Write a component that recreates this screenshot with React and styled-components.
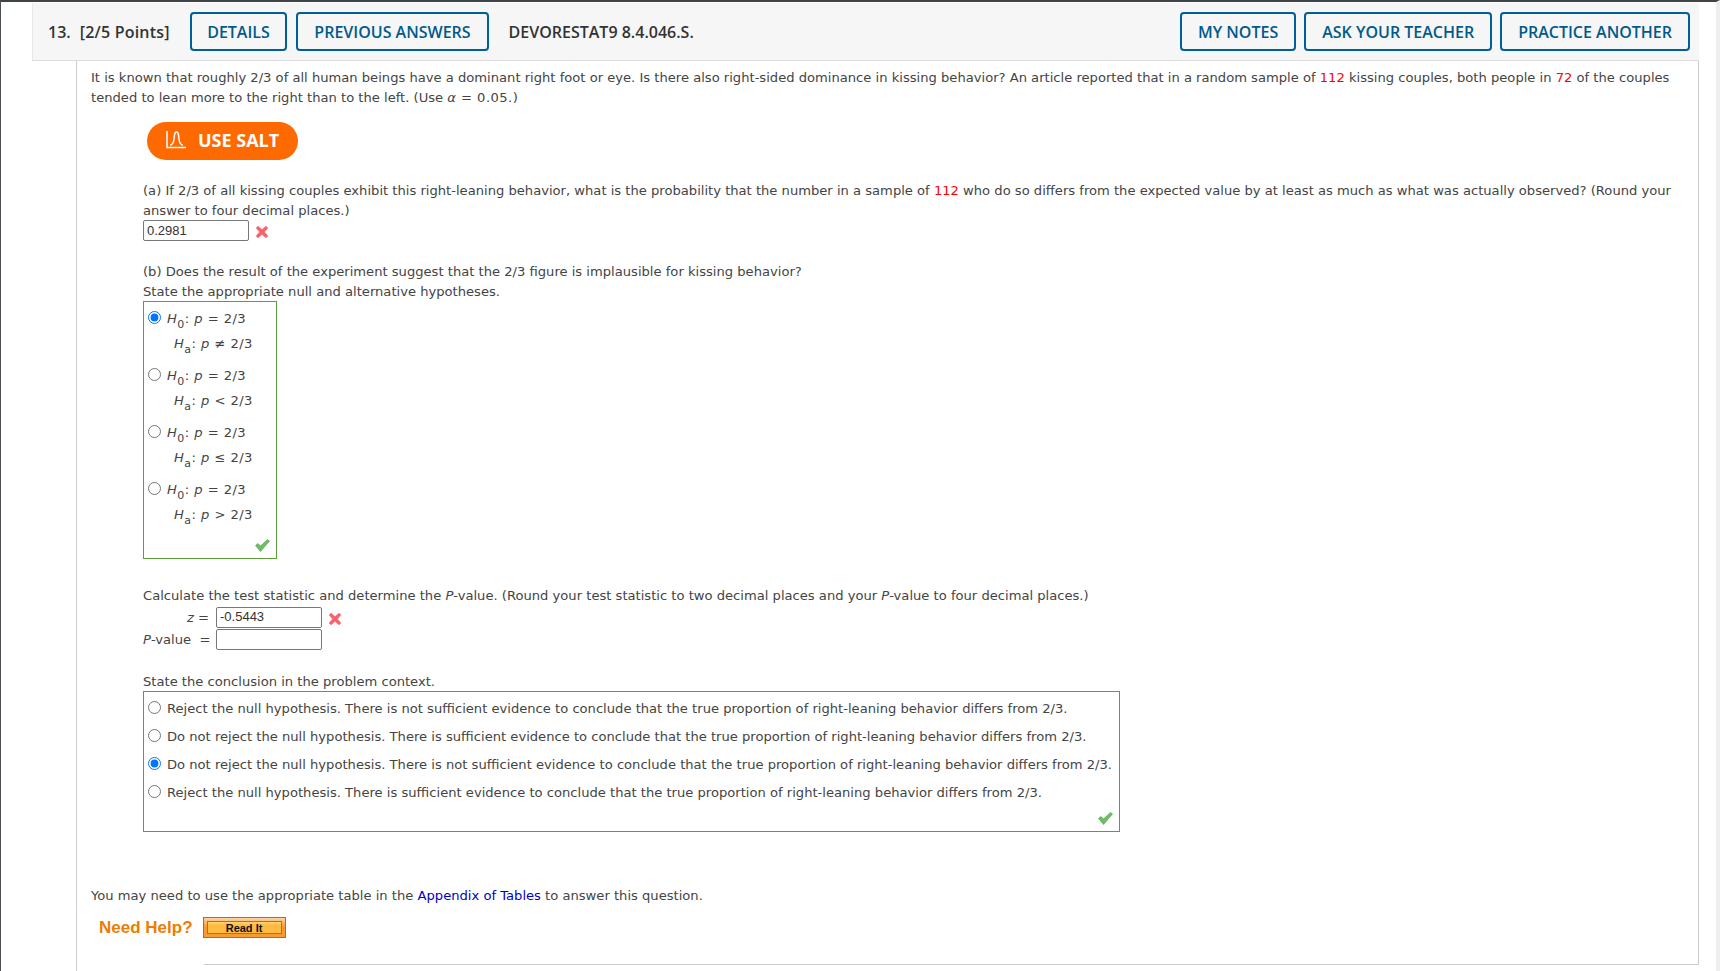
import styled, { createGlobalStyle } from "styled-components";

const GlobalStyle = createGlobalStyle`
  html, body {
    margin: 0;
    padding: 0;
    background: #ffffff;
  }
  body {
    height: 971px;
    overflow: hidden;
    font-family: "DejaVu Sans", Verdana, sans-serif;
    font-size: 13.12px;
    color: #444444;
  }
`;

const Page = styled.div`
  height: 969px;
  border-top: 2px solid #3f4448;
  border-left: 1px solid #4a4f55;
  border-right: 4px solid #eeeeee;
  padding-left: 31px;
  padding-right: 17px;
  display: flex;
  flex-direction: column;
`;

const Header = styled.header`
  height: 58px;
  box-sizing: border-box;
  margin-top: 1px;
  flex-shrink: 0;
  display: flex;
  align-items: center;
  background: #f6f6f6;
  border-bottom: 1px solid #dddddd;
  border-left: 1px solid #e8e8e8;
  padding: 0 9px 0 15px;
  font-family: "Open Sans", "Noto Sans", sans-serif;
  font-size: 16px;
  font-weight: 600;
  color: #333333;
`;

const QuestionNumber = styled.span`
  margin-right: 9px;
`;

const Points = styled.span`
  margin-right: 20px;
  letter-spacing: 0.2px;
`;

const HeaderButton = styled.button`
  height: 39px;
  box-sizing: border-box;
  padding: 0 ${(p) => p.$pad || 16}px;
  margin-right: ${(p) => p.$gap ?? 8}px;
  background: transparent;
  border: 2px solid #005f96;
  border-radius: 4px;
  font: inherit;
  color: #005a8c;
  text-transform: uppercase;
`;

const Reference = styled.span`
  margin-left: 11px;
  flex: 1;
`;

const Panel = styled.main`
  flex: 1;
  margin-left: 44px;
  border-left: 1px solid #cccccc;
  display: flex;
  flex-direction: column;
`;

const Body = styled.div`
  flex: 0 0 903px;
  box-sizing: border-box;
  border-right: 1px solid #cccccc;
  padding: 7px 12px 0 14px;
`;

const BottomRule = styled.div`
  height: 0;
  margin-left: 127px;
  border-bottom: 1px solid #cccccc;
  border-right: 1px solid #cccccc;
  border-bottom-right-radius: 4px;
`;

const Text = styled.p`
  margin: 0;
  line-height: 20px;
`;

const Red = styled.span`
  color: #ff0000;
`;

const SaltButton = styled.button`
  display: flex;
  align-items: center;
  gap: 12px;
  width: 151px;
  height: 38px;
  margin: 14px 0 21px 56px;
  padding: 0 0 2px 19px;
  box-sizing: border-box;
  border: none;
  border-radius: 19px;
  background: #ff6a00;
  color: #ffffff;
  font-family: "Open Sans", "Noto Sans", sans-serif;
  font-size: 18px;
  font-weight: 700;
`;

const Part = styled.section`
  margin-left: 52px;
  margin-bottom: ${(p) => p.$gap || 0}px;
`;

const AnswerRow = styled.div`
  display: flex;
  align-items: center;
  height: 21px;
  margin-top: -1px;
`;

const Answer = styled.input`
  width: 106px;
  height: 21px;
  box-sizing: border-box;
  padding: 0 3px 1px;
  margin: 0;
  border: 1px solid #777777;
  border-radius: 2px;
  outline: none;
  font-family: "Liberation Sans", Arial, sans-serif;
  font-size: 13px;
  color: #333333;
`;

const Mark = styled.svg`
  flex-shrink: 0;
  margin-left: ${(p) => p.$left || 0}px;
  margin-top: 3px;
`;

const HypothesisBox = styled.div`
  position: relative;
  width: 134px;
  height: 258px;
  box-sizing: border-box;
  margin-top: -1px;
  border: 1px solid #5b9e3a;
  padding: 4px 0 0 4px;
`;

const ConclusionBox = styled.div`
  position: relative;
  width: 977px;
  height: 141px;
  box-sizing: border-box;
  margin-top: -1px;
  border: 1px solid #5b9e3a;
  padding: 2px 0 0 4px;
`;

const CheckCorner = styled.div`
  position: absolute;
  right: 6px;
  bottom: 6px;
  line-height: 0;
`;

const Hypothesis = styled.div`
  height: 57px;
`;

const HypothesisLine = styled.div`
  display: flex;
  align-items: center;
  height: 25px;
  padding-left: ${(p) => (p.$indent ? 26 : 0)}px;
`;

const Radio = styled.input.attrs({ type: "radio" })`
  width: 13px;
  height: 13px;
  margin: 0 6px 0 0;
  position: relative;
  top: -1px;
  flex-shrink: 0;
`;

const Formula = styled.span`
  white-space: pre;
  letter-spacing: 0.45px;
  sub {
    font-size: 11px;
    line-height: 0;
    vertical-align: -5px;
  }
`;

const Choice = styled.label`
  display: flex;
  align-items: center;
  height: 28px;
`;

const StatRow = styled.div`
  display: flex;
  align-items: center;
  height: 22px;
`;

const StatLabel = styled.span`
  width: 73px;
  padding-right: 7px;
  box-sizing: border-box;
  text-align: right;
  white-space: pre;
`;

const Link = styled.a`
  color: #0000c8;
`;

const Footer = styled.div`
  margin-top: 54px;
`;

const HelpRow = styled.div`
  display: flex;
  align-items: center;
  gap: 10px;
  margin: 11px 0 0 8px;
`;

const NeedHelp = styled.span`
  font-family: "Liberation Sans", Arial, sans-serif;
  font-size: 17px;
  font-weight: 700;
  color: #ee7d00;
`;

const ReadIt = styled.button`
  width: 83px;
  height: 21px;
  box-sizing: border-box;
  padding: 3px;
  border: 1px solid #a86f2c;
  background: linear-gradient(#fbd5a6, #f79a33 45%, #f79a33);
  display: flex;
`;

const ReadItLabel = styled.span`
  flex: 1;
  box-sizing: border-box;
  display: flex;
  align-items: center;
  justify-content: center;
  border: 1px solid #a8742c;
  background: linear-gradient(#ffd27a, #ffbb40 30%);
  font-family: "Liberation Sans", Arial, sans-serif;
  font-size: 11px;
  font-weight: 700;
  color: #111111;
`;

function SaltIcon() {
  return (
    <svg width="20" height="18" viewBox="0 0 20 18" fill="none" stroke="#ffffff" strokeWidth="1.5">
      <path d="M1 0v16.500h19" />
      <path d="M4 14c2.500 0 3.500-1.500 4-6s.5-7 2.500-7 2 2.500 2.500 7 1.500 6 4 6" />
    </svg>
  );
}

function WrongMark({ left }) {
  return (
    <Mark $left={left} width="14" height="14" viewBox="0 0 14 14">
      <path
        d="M1 3l2-2 4 3.500L11 1l2 2-3.500 4L13 11l-2 2-4-3.500L3 13l-2-2 3.500-4z"
        fill="#f8606a"
        stroke="#f08088"
        strokeWidth="0.5"
      />
    </Mark>
  );
}

function RightMark() {
  return (
    <svg width="15" height="13" viewBox="0 0 15 13">
      <path
        d="M0.500 6.500l2.500-2 2.500 2.500L12.500 0.500 14.500 2 5.500 12.500z"
        fill="#6cbf62"
        stroke="#4f9a4a"
        strokeWidth="0.6"
      />
    </svg>
  );
}

function H({ sub }) {
  return (
    <>
      <i>H</i>
      <sub>{sub}</sub>
    </>
  );
}

const hypotheses = [
  { alt: "≠", checked: true },
  { alt: "<" },
  { alt: "≤" },
  { alt: ">" },
];

const conclusions = [
  { text: "Reject the null hypothesis. There is not sufficient evidence to conclude that the true proportion of right-leaning behavior differs from 2/3." },
  { text: "Do not reject the null hypothesis. There is sufficient evidence to conclude that the true proportion of right-leaning behavior differs from 2/3." },
  { text: "Do not reject the null hypothesis. There is not sufficient evidence to conclude that the true proportion of right-leaning behavior differs from 2/3.", checked: true },
  { text: "Reject the null hypothesis. There is sufficient evidence to conclude that the true proportion of right-leaning behavior differs from 2/3." },
];

export default function App() {
  return (
    <>
      <GlobalStyle />
      <Page>
        <Header>
          <QuestionNumber>13.</QuestionNumber>
          <Points>[2/5 Points]</Points>
          <HeaderButton $pad={15.5} $gap={9}>Details</HeaderButton>
          <HeaderButton $gap={9}>Previous Answers</HeaderButton>
          <Reference>DEVORESTAT9 8.4.046.S.</Reference>
          <HeaderButton>My Notes</HeaderButton>
          <HeaderButton>Ask Your Teacher</HeaderButton>
          <HeaderButton $gap={0}>Practice Another</HeaderButton>
        </Header>
        <Panel>
          <Body>
            <Text>
              It is known that roughly 2/3 of all human beings have a dominant right foot or eye. Is there also
              right-sided dominance in kissing behavior? An article reported that in a random sample of <Red>112</Red>{" "}
              kissing couples, both people in <Red>72</Red> of the couples tended to lean more to the right than to the
              left. (Use{" "}
              <Formula>
                <i>α</i> = 0.05.
              </Formula>
              )
            </Text>
            <SaltButton>
              <SaltIcon />
              USE SALT
            </SaltButton>
            <Part $gap={21}>
              <Text>
                (a) If 2/3 of all kissing couples exhibit this right-leaning behavior, what is the probability that the
                number in a sample of <Red>112</Red> who do so differs from the expected value by at least as much as
                what was actually observed? (Round your answer to four decimal places.)
              </Text>
              <AnswerRow>
                <Answer defaultValue="0.2981" />
                <WrongMark left={6} />
              </AnswerRow>
            </Part>
            <Part $gap={27}>
              <Text>(b) Does the result of the experiment suggest that the 2/3 figure is implausible for kissing behavior?</Text>
              <Text>State the appropriate null and alternative hypotheses.</Text>
              <HypothesisBox>
                {hypotheses.map((item) => (
                  <Hypothesis key={item.alt}>
                    <HypothesisLine>
                      <Radio name="hypothesis" defaultChecked={item.checked} />
                      <Formula>
                        <H sub="0" />: <i>p</i> = 2/3
                      </Formula>
                    </HypothesisLine>
                    <HypothesisLine $indent>
                      <Formula>
                        <H sub="a" />: <i>p</i> {item.alt} 2/3
                      </Formula>
                    </HypothesisLine>
                  </Hypothesis>
                ))}
                <CheckCorner>
                  <RightMark />
                </CheckCorner>
              </HypothesisBox>
            </Part>
            <Part $gap={22}>
              <Text>
                Calculate the test statistic and determine the <i>P</i>-value. (Round your test statistic to two decimal
                places and your <i>P</i>-value to four decimal places.)
              </Text>
              <StatRow>
                <StatLabel>
                  <i>z</i> =
                </StatLabel>
                <Answer defaultValue="-0.5443" />
                <WrongMark left={6} />
              </StatRow>
              <StatRow>
                <StatLabel>
                  <i>P</i>-value{"  "}=
                </StatLabel>
                <Answer />
              </StatRow>
            </Part>
            <Part>
              <Text>State the conclusion in the problem context.</Text>
              <ConclusionBox>
                {conclusions.map((item) => (
                  <Choice key={item.text}>
                    <Radio name="conclusion" defaultChecked={item.checked} />
                    {item.text}
                  </Choice>
                ))}
                <CheckCorner>
                  <RightMark />
                </CheckCorner>
              </ConclusionBox>
            </Part>
            <Footer>
              <Text>
                You may need to use the appropriate table in the <Link>Appendix of Tables</Link> to answer this question.
              </Text>
              <HelpRow>
                <NeedHelp>Need Help?</NeedHelp>
                <ReadIt>
                  <ReadItLabel>Read It</ReadItLabel>
                </ReadIt>
              </HelpRow>
            </Footer>
          </Body>
          <BottomRule />
        </Panel>
      </Page>
    </>
  );
}
